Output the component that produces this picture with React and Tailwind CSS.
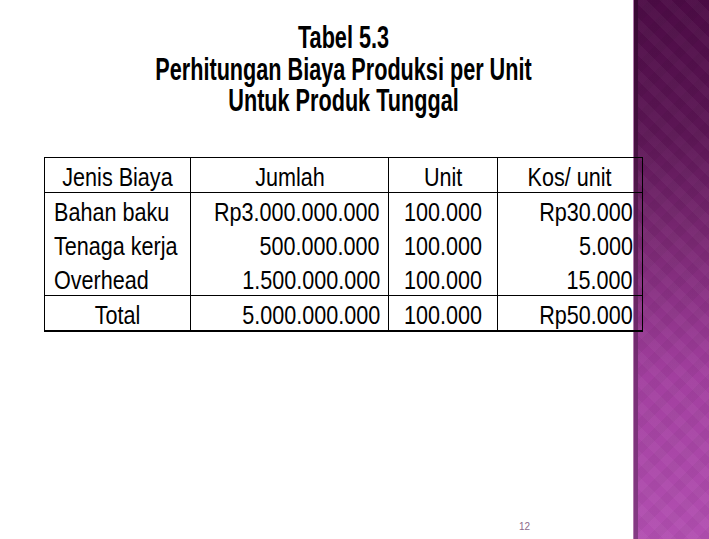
export default function App() {
  const font = { fontFamily: '"Liberation Sans", Arial, sans-serif' };
  const rows = [
    ["Bahan baku", "Rp3.000.000.000", "100.000", "Rp30.000"],
    ["Tenaga kerja", "500.000.000", "100.000", "5.000"],
    ["Overhead", "1.500.000.000", "100.000", "15.000"],
  ];
  const grid = "grid grid-cols-[145px_198px_109px_145px]";
  const cell = "flex h-[34px] pt-[4px] leading-[30px] whitespace-nowrap";
  const S = ({ children, o }) => <span className={`shrink-0 inline-block scale-x-[0.83] ${o}`}>{children}</span>;
  return (
    <div className="flex w-[709px] h-[539px] bg-white overflow-hidden text-black" style={font}>
      <div className="relative z-10 w-[633px] shrink-0 flex flex-col">
        <div className="pl-[44px] pt-[23px]">
          <div className="w-[599px] text-center font-bold text-[26.4px] leading-[31.5px]">
            <div className="scale-x-[0.82] scale-y-[1.16] whitespace-nowrap">Tabel 5.3</div>
            <div className="scale-x-[0.82] scale-y-[1.16] whitespace-nowrap">Perhitungan Biaya Produksi per Unit</div>
            <div className="scale-x-[0.82] scale-y-[1.16] whitespace-nowrap">Untuk Produk Tunggal</div>
          </div>
          <div className="mt-[39px] w-[599px] border border-black border-b-2 text-[26px]">
            <div className={`${grid} border-b border-black`}>
              <div className={`${cell} h-[33px] justify-center`}><S o="origin-center">Jenis Biaya</S></div>
              <div className={`${cell} h-[33px] justify-center border-l border-black`}><S o="origin-center">Jumlah</S></div>
              <div className={`${cell} h-[33px] justify-center border-l border-black`}><S o="origin-center">Unit</S></div>
              <div className={`${cell} h-[33px] justify-center border-l border-black`}><S o="origin-center">Kos/ unit</S></div>
            </div>
            {rows.map((r) => (
              <div key={r[0]} className={grid}>
                <div className={`${cell} pl-[9px]`}><S o="origin-left">{r[0]}</S></div>
                <div className={`${cell} justify-end pr-[8px] border-l border-black`}><S o="origin-right">{r[1]}</S></div>
                <div className={`${cell} justify-center border-l border-black`}><S o="origin-center">{r[2]}</S></div>
                <div className={`${cell} justify-end pr-[9px] border-l border-black`}><S o="origin-right">{r[3]}</S></div>
              </div>
            ))}
            <div className={`${grid} border-t border-black`}>
              <div className={`${cell} justify-center`}><S o="origin-center">Total</S></div>
              <div className={`${cell} justify-end pr-[8px] border-l border-black`}><S o="origin-right">5.000.000.000</S></div>
              <div className={`${cell} justify-center border-l border-black`}><S o="origin-center">100.000</S></div>
              <div className={`${cell} justify-end pr-[9px] border-l border-black`}><S o="origin-right">Rp50.000</S></div>
            </div>
          </div>
        </div>
        <div className="mt-auto pl-[519px] pb-[6px] text-[10px] leading-[12px] text-[#8d6a8c]">
          12
        </div>
      </div>
      <div className="flex-1 flex bg-[linear-gradient(to_bottom,#4c0b45_0%,#5c1655_25%,#7a2873_45%,#a23f9f_70%,#b24fb1_100%)]">
        <div className="w-[1px] bg-[#b07aac]" />
        <div className="w-[4px] bg-black/25" />
        <div className="flex-1 bg-[repeating-linear-gradient(45deg,rgba(255,255,255,0.035)_0_9px,transparent_9px_18px),repeating-linear-gradient(-45deg,rgba(0,0,0,0.035)_0_9px,transparent_9px_18px)]" />
      </div>
    </div>
  );
}
